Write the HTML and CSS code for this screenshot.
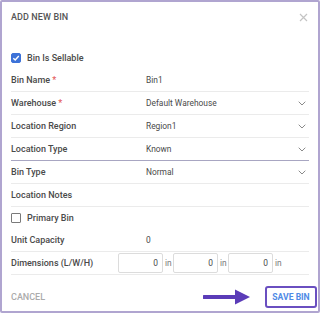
FILE: index.html
```html
<!DOCTYPE html>
<html lang="en">
<head>
    <meta charset="UTF-8">
    <meta name="viewport" content="width=device-width, initial-scale=1.0">
    <title>Add New Bin</title>
    <link rel="stylesheet" href="styles.css">
</head>
<body>
    <div class="dialog">
        <div class="dialog-header">
            <h1>Add New Bin</h1>
            <svg class="close" width="9" height="9" viewBox="0 0 9 9">
                <path d="M1 1L8 8M8 1L1 8" stroke="#c4c4c4" stroke-width="1.2" fill="none"/>
            </svg>
        </div>

        <div class="check-row">
            <span class="checkbox checked">
                <svg width="10" height="10" viewBox="0 0 10 10">
                    <path d="M2.3 5.2L4.2 7L7.8 3" stroke="#fff" stroke-width="1.4" fill="none"/>
                </svg>
            </span>
            <span class="check-label">Bin Is Sellable</span>
        </div>

        <div class="field">
            <label>Bin Name <span class="req">*</span></label>
            <span class="value">Bin1</span>
        </div>
        <div class="field">
            <label>Warehouse <span class="req">*</span></label>
            <span class="value">Default Warehouse</span>
            <svg class="chevron" width="8" height="5" viewBox="0 0 8 5"><path d="M0.7 0.7L4 4L7.3 0.7" stroke="#8a8a8a" stroke-width="1" fill="none"/></svg>
        </div>
        <div class="field">
            <label>Location Region</label>
            <span class="value">Region1</span>
            <svg class="chevron" width="8" height="5" viewBox="0 0 8 5"><path d="M0.7 0.7L4 4L7.3 0.7" stroke="#8a8a8a" stroke-width="1" fill="none"/></svg>
        </div>
        <div class="field active">
            <label>Location Type</label>
            <span class="value">Known</span>
            <svg class="chevron" width="8" height="5" viewBox="0 0 8 5"><path d="M0.7 0.7L4 4L7.3 0.7" stroke="#8a8a8a" stroke-width="1" fill="none"/></svg>
        </div>
        <div class="field">
            <label>Bin Type</label>
            <span class="value">Normal</span>
            <svg class="chevron" width="8" height="5" viewBox="0 0 8 5"><path d="M0.7 0.7L4 4L7.3 0.7" stroke="#8a8a8a" stroke-width="1" fill="none"/></svg>
        </div>
        <div class="field">
            <label>Location Notes</label>
            <span class="value"></span>
        </div>

        <div class="check-row small">
            <span class="checkbox"></span>
            <span class="check-label">Primary Bin</span>
        </div>

        <div class="field">
            <label>Unit Capacity</label>
            <span class="value">0</span>
        </div>
        <div class="field">
            <label>Dimensions (L/W/H)</label>
            <div class="dims">
                <span class="dim-box">0</span><span class="unit">in</span>
                <span class="dim-box">0</span><span class="unit">in</span>
                <span class="dim-box">0</span><span class="unit">in</span>
            </div>
        </div>

        <div class="dialog-footer">
            <span class="btn-cancel">Cancel</span>
            <div class="footer-right">
                <svg class="arrow" width="48" height="18" viewBox="0 0 48 18">
                    <path d="M1 9H34" stroke="#5b3cb8" stroke-width="4" stroke-linecap="round"/>
                    <path d="M32 1.5L47 9L32 16.5Z" fill="#5b3cb8"/>
                </svg>
                <span class="btn-save">Save Bin</span>
            </div>
        </div>
    </div>
</body>
</html>
```

FILE: styles.css
```css
* {
    box-sizing: border-box;
    margin: 0;
    padding: 0;
}

body {
    font-family: Roboto, "Noto Sans", Arial, sans-serif;
    background-color: #fff;
    color: #454545;
}

.dialog {
    width: 320px;
    height: 313px;
    border: 2px solid #b0a5d0;
    border-radius: 2px;
    background: white;
    padding: 0 9px;
}

.dialog-header {
    display: flex;
    justify-content: space-between;
    align-items: center;
    height: 30px;
}

.dialog-header h1 {
    font-size: 9px;
    font-weight: 500;
    letter-spacing: 0.1px;
    text-transform: uppercase;
    color: #555;
}

.close {
    margin-right: 1px;
}

.check-row {
    display: flex;
    align-items: center;
    height: 22px;
    margin-top: 15px;
}

.check-row.small {
    margin-top: 0;
}

.checkbox {
    width: 10px;
    height: 10px;
    border: 1px solid #7a7a7a;
    border-radius: 1px;
    margin-right: 6px;
    display: flex;
}

.checkbox.checked {
    background: #3d72d8;
    border-color: #3d72d8;
    border-radius: 2px;
}

.checkbox.checked svg {
    margin: -1px;
}

.check-label {
    font-size: 9px;
    font-weight: 500;
    color: #4a4a4a;
}

.field {
    display: flex;
    align-items: center;
    height: 23px;
    border-bottom: 1px solid #ebebeb;
    font-size: 8.4px;
}

.field.active {
    border-bottom-color: #a8a6c2;
}

.field label {
    width: 135px;
    font-size: 9px;
    font-weight: 500;
    color: #4a4a4a;
}

.req {
    color: #e45c5c;
}

.field .value {
    flex: 1;
    color: #4a4a4a;
}

.chevron {
    margin-right: 3px;
}

.dims {
    display: flex;
    align-items: center;
    margin-left: -28px;
}

.dim-box {
    width: 45px;
    height: 20px;
    border: 1px solid #dcdcdc;
    border-radius: 2px;
    text-align: right;
    padding-right: 4px;
    line-height: 18px;
    color: #4a4a4a;
}

.unit {
    width: 10px;
    padding-left: 2px;
    color: #777;
}

.dialog-footer {
    display: flex;
    justify-content: space-between;
    align-items: center;
    margin-top: 11px;
    margin-right: -8px;
}

.btn-cancel {
    font-size: 9px;
    font-weight: 500;
    text-transform: uppercase;
    color: #ababab;
}

.footer-right {
    display: flex;
    align-items: center;
    gap: 14px;
}

.btn-save {
    font-size: 8.6px;
    font-weight: 700;
    text-transform: uppercase;
    color: #4f8ae6;
    border: 2px solid #6a4fc0;
    border-radius: 3px;
    padding: 4px 3px;
    width: 52px;
    text-align: center;
}
```
